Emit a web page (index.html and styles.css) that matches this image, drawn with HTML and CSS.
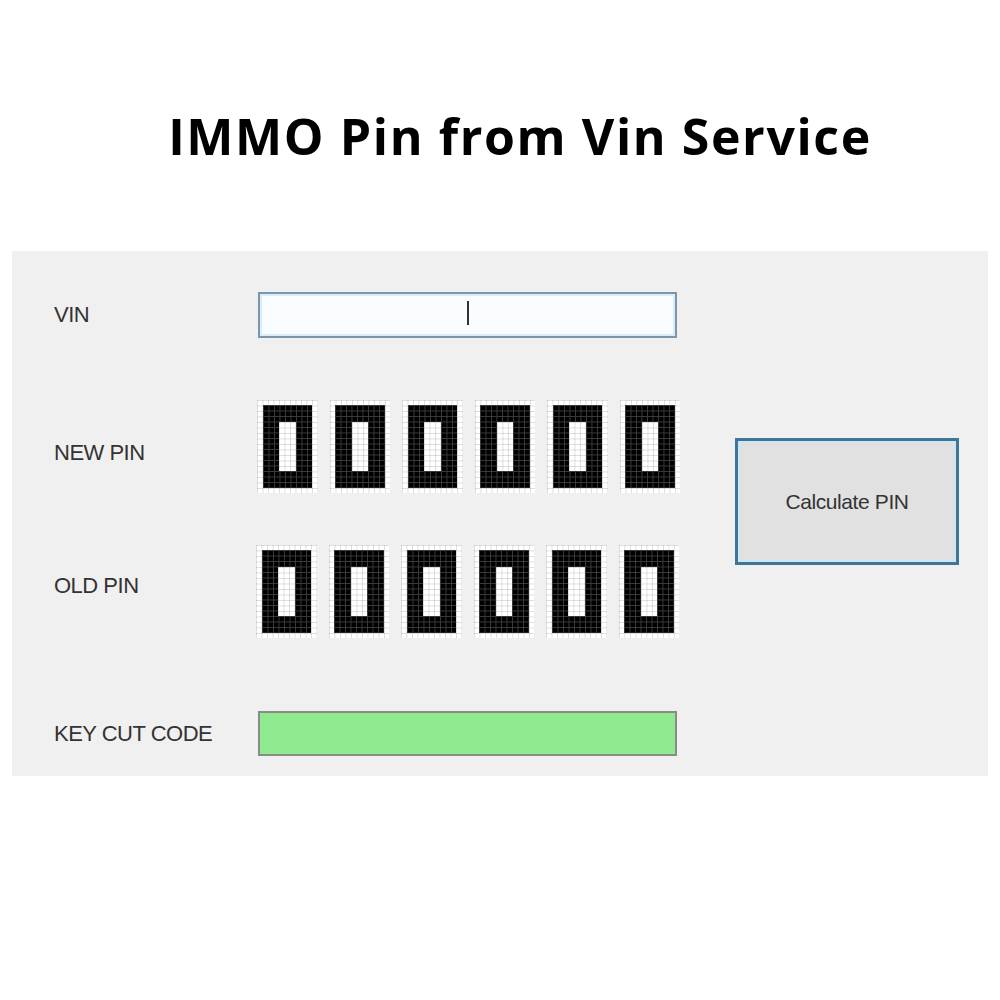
FILE: index.html
```html
<!DOCTYPE html>
<html lang="en">
<head>
    <meta charset="UTF-8">
    <meta name="viewport" content="width=device-width, initial-scale=1.0">
    <title>IMMO Pin from Vin Service</title>
    <link rel="stylesheet" href="styles.css">
</head>
<body>
    <h1 class="title">IMMO Pin from Vin Service</h1>

    <div class="panel">
        <div class="form">
            <div class="row">
                <label class="label" for="vin">VIN</label>
                <div class="vin-box">
                    <input type="text" id="vin" class="vin">
                    <span class="caret"></span>
                </div>
            </div>

            <div class="row row-new">
                <span class="label label-new">NEW PIN</span>
                <div class="pins">
                    <div class="digit"><div class="seg"><div class="hole"></div></div></div>
                    <div class="digit"><div class="seg"><div class="hole"></div></div></div>
                    <div class="digit"><div class="seg"><div class="hole"></div></div></div>
                    <div class="digit"><div class="seg"><div class="hole"></div></div></div>
                    <div class="digit"><div class="seg"><div class="hole"></div></div></div>
                    <div class="digit"><div class="seg"><div class="hole"></div></div></div>
                </div>
            </div>

            <div class="row row-old">
                <span class="label label-old">OLD PIN</span>
                <div class="pins">
                    <div class="digit"><div class="seg"><div class="hole"></div></div></div>
                    <div class="digit"><div class="seg"><div class="hole"></div></div></div>
                    <div class="digit"><div class="seg"><div class="hole"></div></div></div>
                    <div class="digit"><div class="seg"><div class="hole"></div></div></div>
                    <div class="digit"><div class="seg"><div class="hole"></div></div></div>
                    <div class="digit"><div class="seg"><div class="hole"></div></div></div>
                </div>
            </div>

            <div class="row row-key">
                <span class="label">KEY CUT CODE</span>
                <div class="key-code"></div>
            </div>
        </div>

        <button class="calc" type="button">Calculate PIN</button>
    </div>
</body>
</html>
```

FILE: styles.css
```css
body {
    margin: 0;
    background: #fff;
    font-family: "Liberation Sans", Arial, sans-serif;
}

.title {
    margin: 0;
    padding: 106px 0 0 40px;
    height: 148px;
    box-sizing: border-box;
    text-align: center;
    font-family: "Open Sans", "DejaVu Sans", sans-serif;
    font-weight: 700;
    font-size: 50px;
    line-height: 60px;
    letter-spacing: 1.6px;
    color: #000;
}

.panel {
    display: flex;
    margin: 103px 12px 0;
    padding: 41px 0 20px 42px;
    background: #f0f0f0;
}

.form {
    display: flex;
    flex-direction: column;
    width: 623px;
}

.row {
    display: flex;
    align-items: center;
}

.row-new { margin-top: 61.5px; }
.row-old { margin-top: 51.5px; }
.row-key { margin-top: 73px; }

.label {
    width: 204px;
    flex: none;
    font-size: 22px;
    letter-spacing: -0.5px;
    color: #333;
}

.label-new { margin-top: 14px; }
.label-old { margin-top: -10px; }

.vin-box {
    position: relative;
    width: 419px;
    height: 46px;
}

.vin {
    display: block;
    width: 100%;
    height: 100%;
    box-sizing: border-box;
    margin: 0;
    border: 2px solid #7d95a8;
    background: #f9fdff;
    box-shadow: inset 0 0 0 2px #d9eefa;
    outline: none;
}

/* text cursor sitting in the empty field */
.caret {
    position: absolute;
    left: 209px;
    top: 9px;
    width: 2px;
    height: 24px;
    background: #333;
}

.pins {
    display: flex;
    gap: 12px;
    margin-left: -1px;
}

/* dot-matrix digit: 11 x 17 cells of 5.5px */
.digit,
.hole {
    background-color: #fff;
    background-image:
        linear-gradient(to right, rgba(0, 0, 0, 0.13) 1px, transparent 1px),
        linear-gradient(to bottom, rgba(0, 0, 0, 0.13) 1px, transparent 1px);
    background-size: 5.5px 5.5px;
}

.digit {
    width: 60.5px;
    height: 93.5px;
    padding: 5.5px;
    box-sizing: border-box;
}

.seg {
    width: 49.5px;
    height: 82.5px;
    padding: 16.5px;
    box-sizing: border-box;
    background-color: #000;
    background-image:
        linear-gradient(to right, #3c3c3c 1px, transparent 1px),
        linear-gradient(to bottom, #3c3c3c 1px, transparent 1px);
    background-size: 5.5px 5.5px;
}

.hole {
    width: 16.5px;
    height: 49.5px;
}

.row-old .pins {
    margin-left: -2px;
}

.key-code {
    width: 419px;
    height: 45px;
    box-sizing: border-box;
    border: 2px solid #8a8a8a;
    background: #90ea8f;
}

.calc {
    flex: none;
    width: 224px;
    height: 127px;
    margin: 146px 0 0 58px;
    box-sizing: border-box;
    border: 3px solid #3f7697;
    box-shadow: inset 0 0 0 2px #cbe6f5;
    background: #e1e1e1;
    font-family: "Liberation Sans", Arial, sans-serif;
    font-size: 21px;
    letter-spacing: -0.4px;
    color: #333;
    cursor: pointer;
}
```
